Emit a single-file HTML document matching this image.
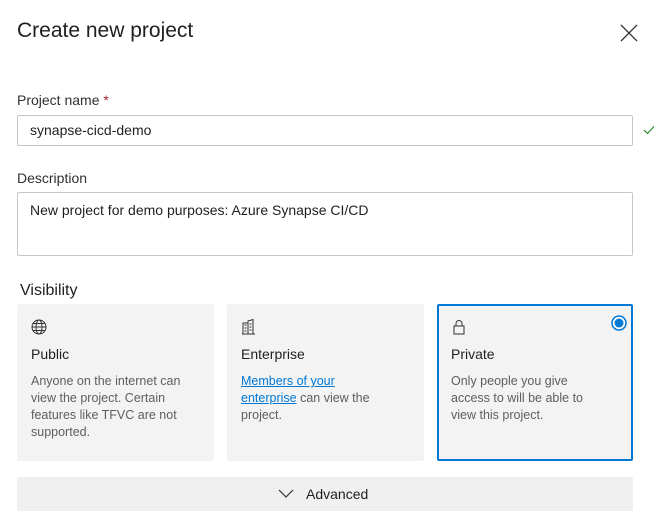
<!DOCTYPE html><html><head><style>
body{margin:0;width:659px;height:524px;background:#fff;font-family:"Liberation Sans",sans-serif;color:#201f1e;position:relative;overflow:hidden}
.a{position:absolute}
.lbl{font-size:14px;color:#323130}
.inp{border:1px solid #c8c6c4;border-radius:2px;box-sizing:border-box;font-size:14px;padding-left:12px}
.card{position:absolute;top:304px;height:157px;background:#f3f3f3;border-radius:2px;box-sizing:border-box}
.card .t{position:absolute;left:14px;top:42px;font-size:14px}
.card .d{position:absolute;left:14px;top:69px;font-size:12.5px;line-height:17px;color:#605e5c;width:190px;white-space:nowrap}
.card svg{position:absolute;left:14px;top:15px}
</style></head><body>
<div class="a" style="left:17px;top:19px;font-size:21px;">Create new project</div>
<svg class="a" style="left:620px;top:24px" width="18" height="18"><path d="M1 1L17 17M17 1L1 17" stroke="#323130" stroke-width="1.3"/></svg>
<div class="a lbl" style="left:17px;top:92px">Project name <span style="color:#a4262c">*</span></div>
<div class="a inp" style="left:17px;top:115px;width:616px;height:31px;line-height:29px">synapse-cicd-demo</div>
<svg class="a" style="left:643px;top:125px" width="12" height="10"><path d="M1 5L4.5 8.5L11 1.5" stroke="#107c10" fill="none" stroke-width="1"/></svg>
<div class="a lbl" style="left:17px;top:170px">Description</div>
<div class="a inp" style="left:17px;top:192px;width:616px;height:64px;padding-top:9px">New project for demo purposes: Azure Synapse CI/CD</div>
<div class="a" style="left:20px;top:282px;font-size:16px">Visibility</div>
<div class="card" style="left:17px;width:197px">
<svg width="16" height="16" viewBox="0 0 16 16"><g fill="none" stroke="#323130" stroke-width="1"><circle cx="8" cy="8" r="7"/><ellipse cx="8" cy="8" rx="3" ry="7"/><path d="M1 8H15M2 4.5H14M2 11.5H14"/></g></svg>
<div class="t">Public</div><div class="d">Anyone on the internet can<br>view the project. Certain<br>features like TFVC are not<br>supported.</div></div>
<div class="card" style="left:227px;width:197px">
<svg width="16" height="16" viewBox="0 0 16 16"><g fill="none" stroke="#323130" stroke-width="1"><path d="M2 15V4H7V15M7 15V2L12 0.5V15M1 15H14M3.5 6H5.5M3.5 9H5.5M3.5 12H5.5M8.5 5H10.5M8.5 8H10.5M8.5 11H10.5"/></g></svg>
<div class="t">Enterprise</div><div class="d"><span style="color:#0078d4;text-decoration:underline">Members of your</span><br><span style="color:#0078d4;text-decoration:underline">enterprise</span> can view the<br>project.</div></div>
<div class="card" style="left:437px;width:196px;background:#f3f3f3;border:2px solid #0078d4">
<svg width="16" height="16" viewBox="0 0 16 16" style="left:12px;top:13px"><g fill="none" stroke="#323130" stroke-width="1"><rect x="3" y="7" width="10" height="8"/><path d="M5 7V4.5A3 3 0 0 1 11 4.5V7"/></g></svg>
<div class="t" style="left:12px;top:40px">Private</div><div class="d" style="left:12px;top:67px">Only people you give<br>access to will be able to<br>view this project.</div>
<svg width="16" height="16" style="left:172px;top:9px"><circle cx="8" cy="8" r="7" fill="#fff" stroke="#0078d4" stroke-width="1.5"/><circle cx="8" cy="8" r="4.5" fill="#0078d4"/></svg></div>
<div class="a" style="left:17px;top:477px;width:616px;height:34px;background:#f0f0f0;border-radius:2px"></div>
<svg class="a" style="left:278px;top:489px" width="16" height="10"><path d="M1 1L8 8L15 1" stroke="#323130" fill="none" stroke-width="1.2"/></svg>
<div class="a" style="left:306px;top:486px;font-size:14px">Advanced</div>
</body></html>
